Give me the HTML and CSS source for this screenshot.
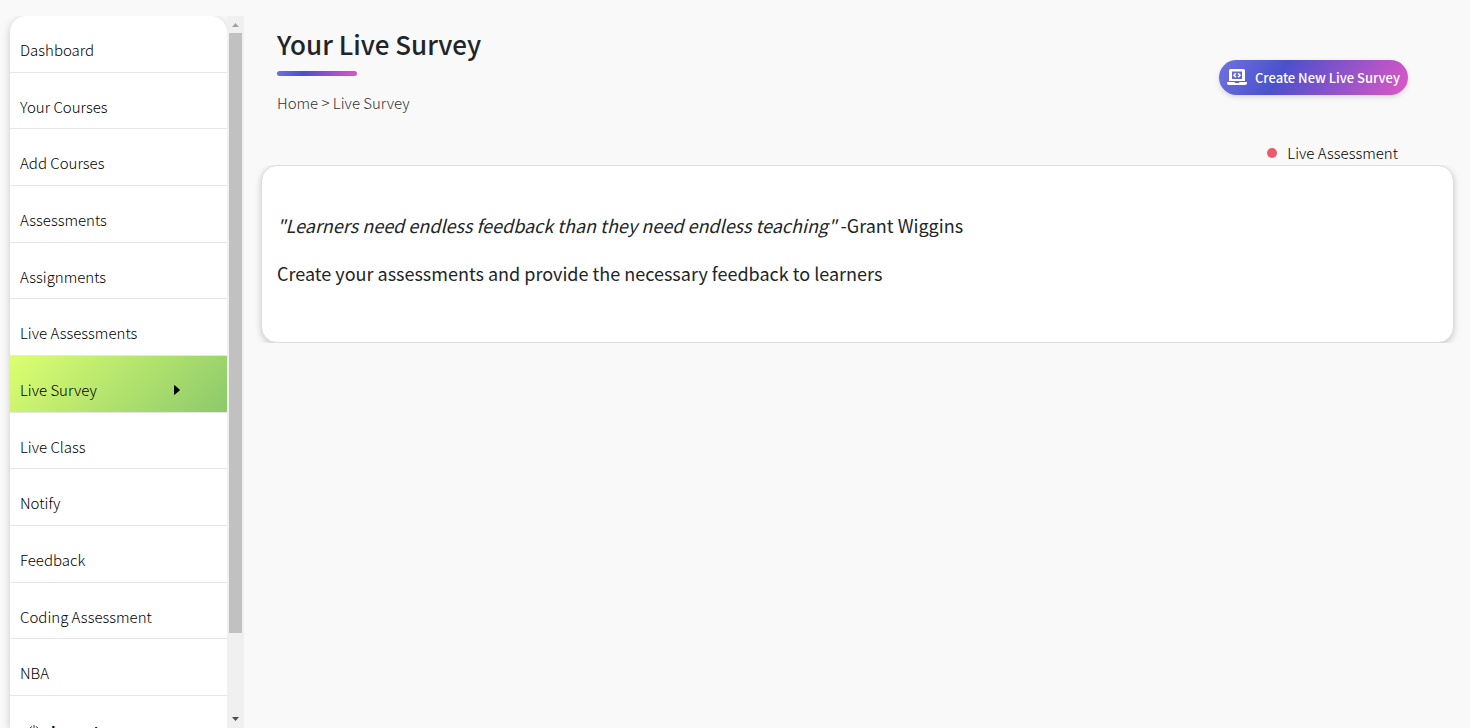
FILE: index.html
```html
<!DOCTYPE html>
<html lang="en">
<head>
    <meta charset="UTF-8">
    <meta name="viewport" content="width=device-width, initial-scale=1.0">
    <title>Your Live Survey</title>
    <link rel="stylesheet" href="styles.css">
</head>
<body>
    <div class="layout">
        <aside class="sidebar">
            <nav class="menu">
                <a href="#">Dashboard</a>
                <a href="#">Your Courses</a>
                <a href="#">Add Courses</a>
                <a href="#">Assessments</a>
                <a href="#">Assignments</a>
                <a href="#">Live Assessments</a>
                <a href="#" class="active">Live Survey
                    <svg class="caret" viewBox="0 0 6 10"><path d="M0 .6v8.8q0 .6.6.3L5.6 5.4q.5-.4 0-.8L.6.3Q0 0 0 .6z"/></svg>
                </a>
                <a href="#">Live Class</a>
                <a href="#">Notify</a>
                <a href="#">Feedback</a>
                <a href="#">Coding Assessment</a>
                <a href="#">NBA</a>
                <a href="#" class="logout">
                    <svg viewBox="0 0 12 12"><path d="M4 1.500a5 5 0 1 0 4 0M6 0v6"/></svg>
                    Logout
                </a>
            </nav>
            <div class="scrollbar">
                <svg class="arrow muted" viewBox="0 0 17 17"><path d="M5 11h7L8.500 7z"/></svg>
                <div class="thumb"></div>
                <svg class="arrow" viewBox="0 0 17 17"><path d="M5 6h7L8.500 10z"/></svg>
            </div>
        </aside>

        <main class="content">
            <header class="page-header">
                <div>
                    <h1>Your Live Survey</h1>
                    <div class="underline"></div>
                    <p class="breadcrumb"><a href="#">Home</a> &gt; <a href="#">Live Survey</a></p>
                </div>
                <button class="create-btn">
                    <svg viewBox="0 0 20 16">
                        <path fill-rule="evenodd" d="M3.500 0h13Q18 0 18 1.500V12H2V1.500Q2 0 3.500 0zM5 2.500v7.500h10V2.500z"/>
                        <path d="M0 13h7.500q.2 1 1 1h3q.8 0 1-1H20v1q0 2-2 2H2q-2 0-2-2z"/>
                        <path class="code" d="M8.900 4.300 7 6.250l1.900 1.950M11.100 4.300 13 6.250l-1.900 1.950"/>
                    </svg>
                    Create New Live Survey
                </button>
            </header>

            <div class="legend"><span class="dot"></span>Live Assessment</div>

            <section class="card">
                <p><i>"Learners need endless feedback than they need endless teaching"</i> -Grant Wiggins</p>
                <p>Create your assessments and provide the necessary feedback to learners</p>
            </section>
        </main>
    </div>
</body>
</html>
```
FILE: styles.css
```css
* {
    box-sizing: border-box;
}

body {
    margin: 0;
    background: #f9f9f9;
    color: #212529;
    font-family: "Noto Sans CJK JP", "Noto Sans", sans-serif;
    font-size: 15px;
    font-weight: 300;
    line-height: 24px;
}

a {
    color: inherit;
    text-decoration: none;
}

.layout {
    display: flex;
    height: 100vh;
    overflow: hidden;
}

.sidebar {
    display: flex;
    flex: none;
    width: 244px;
    padding: 16px 0 0 10px;
}

.menu {
    flex: 1;
    height: 100%;
    background: #fff;
    border-radius: 16px 16px 0 0;
    box-shadow: 0 2px 8px rgba(0, 0, 0, 0.2);
    clip-path: inset(0 0 0 -10px);
}

.menu a {
    display: flex;
    align-items: center;
    padding: 23px 10px 11px;
    border-bottom: 1px solid #e6e6e6;
    color: #000;
    line-height: 1.445;
}

.menu .active {
    background: linear-gradient(135deg, #dcff70, #8cc96c);
}

.caret {
    width: 6px;
    height: 10px;
    margin-left: auto;
    margin-right: 37px;
    fill: #000;
}

.menu .logout {
    gap: 11px;
    padding-left: 18px;
    font-size: 14px;
    font-weight: bold;
    line-height: 24px;
}

.logout svg {
    width: 12px;
    height: 14px;
    fill: none;
    stroke: #333;
}

.scrollbar {
    display: flex;
    flex-direction: column;
    width: 17px;
    background: #f0f0f0;
}

.thumb {
    height: 600px;
    flex: 0 1 auto;
    margin: 0 2px;
    background: #c1c1c1;
}

.arrow {
    flex: none;
    width: 17px;
    height: 17px;
    margin-top: auto;
    fill: #505050;
}

.arrow.muted {
    margin-top: 0;
    fill: #a3a3a3;
}

.content {
    flex: 1;
    padding: 22px 16px 0 17px;
}

.page-header {
    display: flex;
    justify-content: space-between;
    align-items: center;
    padding: 0 46px 0 16px;
}

h1 {
    margin: 0;
    font-size: 26px;
    font-weight: 500;
    line-height: 44px;
}

.underline {
    width: 80px;
    height: 5px;
    margin-top: 5px;
    border-radius: 3px;
    background: linear-gradient(120deg, #6f73df, #4b50cd 33%, #df57c5);
}

.breadcrumb {
    margin: 15px 0 17px;
}

.breadcrumb a {
    color: #333;
}

.create-btn {
    display: flex;
    align-items: center;
    gap: 8px;
    height: 35px;
    padding: 0 8px;
    border: none;
    border-radius: 18px;
    background: linear-gradient(120deg, #6f73df, #4b50cd 33%, #df57c5);
    box-shadow: 0 2px 5px rgba(0, 0, 0, 0.15);
    color: #fff;
    font-family: inherit;
    font-size: 13px;
    font-weight: 500;
    cursor: pointer;
}

.create-btn svg {
    width: 20px;
    height: 16px;
    fill: #fff;
}

.create-btn .code {
    fill: none;
    stroke: #fff;
    stroke-width: 1.6;
}

.legend {
    display: flex;
    align-items: center;
    justify-content: flex-end;
    gap: 10px;
    padding: 9px 56px 0 0;
    color: #000;
}

.dot {
    width: 10px;
    height: 10px;
    border-radius: 50%;
    background: #ec5a6b;
}

.card {
    padding: 43px 15px 37px;
    background: #fff;
    border: 1px solid #ddd;
    border-radius: 16px;
    box-shadow: 0 2px 6px rgba(0, 0, 0, 0.2);
    clip-path: inset(0 -8px 0 -8px);
    font-size: 18px;
    font-weight: 400;
}

.card p {
    margin: 0 0 16px;
    line-height: 32px;
}
```
